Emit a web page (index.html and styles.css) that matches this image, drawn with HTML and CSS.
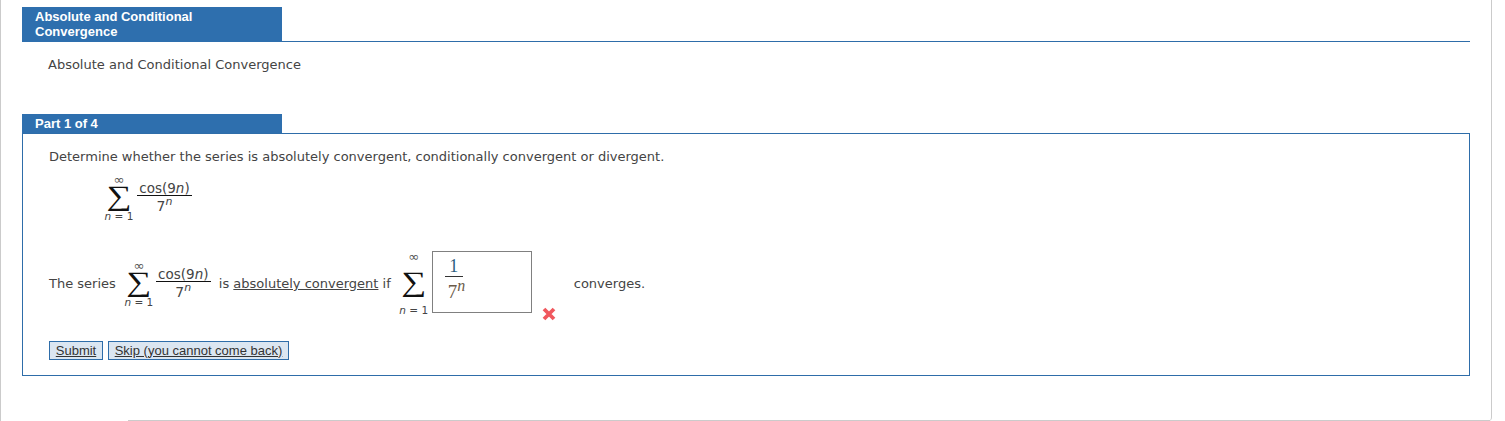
FILE: index.html
```html
<!DOCTYPE html>
<html lang="en">
<head>
<meta charset="utf-8">
<title>Absolute and Conditional Convergence</title>
<link rel="stylesheet" href="styles.css">
</head>
<body>
<main class="page">
  <section class="head">
    <h1 class="tab tab-title">Absolute and Conditional Convergence</h1>
  </section>
  <p class="intro">Absolute and Conditional Convergence</p>
  <section class="part">
    <h2 class="tab tab-part">Part 1 of 4</h2>
    <div class="panel">
      <p class="question">Determine whether the series is absolutely convergent, conditionally convergent or divergent.</p>
      <div class="display">
        <span class="sum"><span class="sup">∞</span><span class="sigma">∑</span><span class="sub"><i>n</i> = 1</span></span>
        <span class="frac"><span class="num">cos(9<i>n</i>)</span><span class="den">7<sup><i>n</i></sup></span></span>
      </div>
      <div class="answer">
        <span class="word">The series</span>
        <span class="sum sum-inline"><span class="sup">∞</span><span class="sigma">∑</span><span class="sub"><i>n</i> = 1</span></span>
        <span class="frac frac-inline"><span class="num">cos(9<i>n</i>)</span><span class="den">7<sup><i>n</i></sup></span></span>
        <span class="word word-is">is <span class="choice">absolutely convergent</span> if</span>
        <span class="sum sum-input"><span class="sup">∞</span><span class="sigma">∑</span><span class="sub"><i>n</i> = 1</span></span>
        <span class="input-box">
          <span class="entry"><span class="entry-num">1</span><span class="entry-den">7<sup><i>n</i></sup></span></span>
        </span>
        <svg class="wrong" viewBox="0 0 14 14" width="14" height="14" aria-label="incorrect"><path d="M2 2 12 12M12 2 2 12" fill="none" stroke="#f0585e" stroke-width="3.8"/></svg>
        <span class="word word-end">converges.</span>
      </div>
      <div class="actions">
        <button class="btn btn-submit" type="button">Submit</button>
        <button class="btn btn-skip" type="button">Skip (you cannot come back)</button>
      </div>
    </div>
  </section>
</main>
</body>
</html>
```
FILE: styles.css
```css
* { box-sizing: border-box; }
html, body { margin: 0; padding: 0; background: #fff; }
body { width: 1505px; height: 421px; overflow: hidden; }
.page {
  position: relative;
  width: 1492px;
  height: 421px;
  padding: 7px 21px 0 21px;
  border-left: 1px solid #cbcbcb;
  border-right: 1px solid #cbcbcb;
  border-bottom-right-radius: 4px;
  font-family: "DejaVu Sans", Verdana, sans-serif;
  font-size: 13px;
  color: #444;
}
.page::after {
  content: "";
  position: absolute;
  left: 127px;
  right: 1px;
  bottom: 0;
  height: 1px;
  background: #cbcbcb;
}
.head { border-bottom: 1px solid #2e6da9; height: 35px; }
.tab {
  margin: 0;
  width: 260px;
  background: #2e6fae;
  color: #fff;
  font-family: "Liberation Sans", Arial, sans-serif;
  font-weight: 700;
  font-size: 13px;
  line-height: 15px;
  padding-left: 13px;
}
.tab-title { height: 35px; padding-top: 2px; padding-right: 40px; }
.tab-part { height: 20px; padding-top: 2px; }
.intro { margin: 15px 0 0 26px; line-height: 16px; height: 16px; }
.part { margin-top: 41px; }
.panel {
  height: 243px;
  margin-top: -1px;
  border: 1px solid #2e6da9;
  padding: 15px 26px 0;
}
.question { margin: 0; line-height: 16px; }
.display { display: flex; margin: 10px 0 0 55px; height: 56px; }
.sum { display: flex; flex-direction: column; align-items: center; width: 30px; flex: none; }
.sup { font-size: 13px; line-height: 10px; height: 10px; color: #555; }
.sigma {
  font-family: "Liberation Serif", serif;
  font-size: 35px;
  line-height: 23px;
  height: 23px;
  color: #111;
  transform: translateY(-1px) scaleY(0.8);
}
.sub { font-size: 10.5px; line-height: 12px; margin-top: 2px; white-space: nowrap; }
.frac { display: flex; flex-direction: column; align-items: center; width: 55px; flex: none; margin: 3px 0 0 3px; }
.num { height: 18px; padding-top: 2px; line-height: 16px; border-bottom: 1px solid #111; width: 100%; text-align: center; font-size: 13.5px; }
.den { line-height: 18px; height: 18px; margin-top: 1px; font-size: 14px; }
.den sup { font-size: 11px; line-height: 0; }
.answer { display: flex; align-items: flex-start; height: 76px; margin-top: 20px; }
.word { line-height: 16px; margin-top: 25px; white-space: pre; flex: none; }
.word-is { margin-left: 8px; }
.word-end { margin-left: 18px; }
.choice { text-decoration: underline; }
.sum-inline { margin: 10px 0 0 8px; }
.frac-inline { margin: 13px 0 0 2px; }
.sum-input { margin: 1px 0 0 8px; }
.sum-input .sigma { margin-top: 9px; }
.sum-input .sub { margin-top: 10px; }
.input-box {
  flex: none;
  width: 100px;
  height: 62px;
  margin-left: 3px;
  border: 1px solid #808080;
  padding: 7px 0 0 12px;
}
.entry { display: flex; flex-direction: column; width: 18px; font-family: "Liberation Serif", serif; font-size: 18px; }
.entry-num { height: 18px; line-height: 15px; width: 100%; text-align: center; border-bottom: 1px solid #333; color: #2b5f7d; }
.entry-den { line-height: 20px; margin-top: 5px; padding-left: 3px; font-size: 19px; color: #6b5a48; white-space: nowrap; }
.entry-den sup { font-size: 16px; line-height: 0; }
.wrong { margin: 56px 0 0 10px; flex: none; }
.actions { display: flex; gap: 5px; margin-top: 14px; }
.btn {
  height: 19px;
  padding: 0;
  border: 1px solid #2e6da9;
  background: #dbe6f1;
  color: #333;
  font-family: "Liberation Sans", Arial, sans-serif;
  font-size: 13px;
  line-height: 16px;
  text-decoration: underline;
  white-space: nowrap;
}
.btn-submit { width: 54px; }
.btn-skip { width: 181px; }
```
